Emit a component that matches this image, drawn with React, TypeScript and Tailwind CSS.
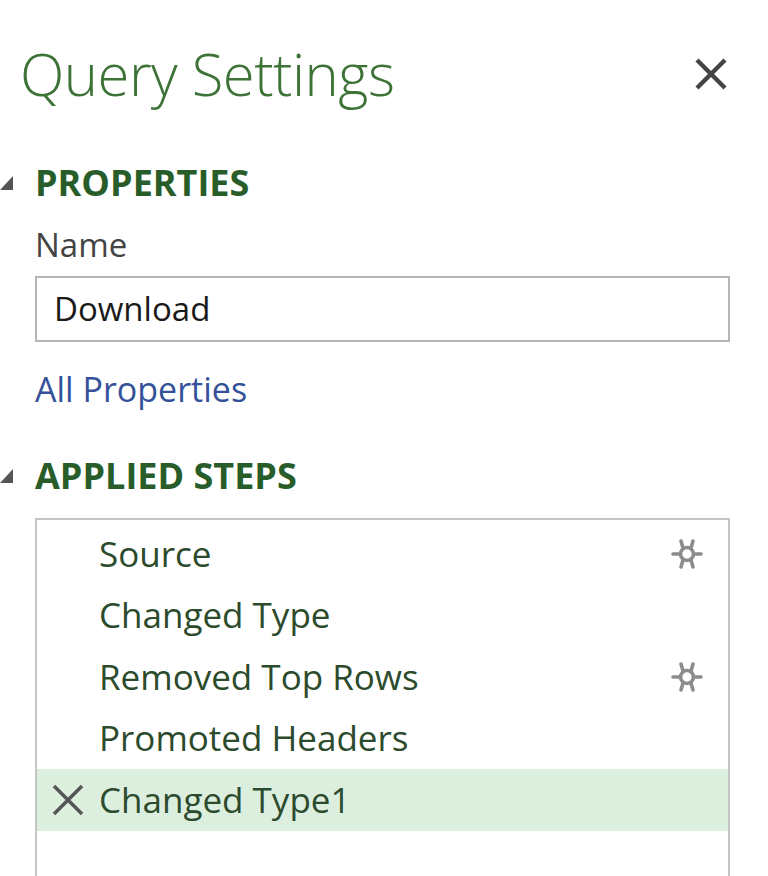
import React from "react";

function Gear() {
  return (
    <svg width="36" height="36" viewBox="0 0 36 36" fill="none" stroke="#8c8c8c" strokeWidth="3.6" strokeLinecap="round">
      <circle cx="18" cy="18" r="6.5" />
      <line x1="14" y1="12" x2="12" y2="5" />
      <line x1="22" y1="12" x2="24" y2="5" />
      <line x1="11.5" y1="18" x2="4" y2="18" />
      <line x1="24.5" y1="18" x2="32" y2="18" />
      <line x1="14" y1="24" x2="12" y2="31" />
      <line x1="22" y1="24" x2="24" y2="31" />
    </svg>
  );
}

function Tri() {
  return (
    <svg width="13" height="14" viewBox="0 0 13 14">
      <polygon points="13,0 13,14 0,14" fill="#555" />
    </svg>
  );
}

export default function App() {
  const steps = [
    { t: "Source", gear: true },
    { t: "Changed Type", gear: false },
    { t: "Removed Top Rows", gear: true },
    { t: "Promoted Headers", gear: false },
    { t: "Changed Type1", gear: false, sel: true },
  ];
  return (
    <div className="w-[768px] h-[876px] overflow-hidden bg-white" style={{ fontFamily: '"Open Sans", "Noto Sans", sans-serif' }}>
      <div className="flex items-center justify-between pl-[20px] pr-[40px] pt-[34px]">
        <div className="text-[58px] leading-[80px] font-light tracking-[-0.5px] text-[#3d7336]">Query Settings</div>
        <svg width="34" height="34" viewBox="0 0 34 34" stroke="#444" strokeWidth="4.5" strokeLinecap="butt">
          <line x1="3" y1="3" x2="31" y2="31" />
          <line x1="31" y1="3" x2="3" y2="31" />
        </svg>
      </div>

      <div className="flex items-center mt-[49px]">
        <div className="w-[35px] flex items-start h-[30px] pt-[8px]"><Tri /></div>
        <div className="text-[36px] leading-[40px] font-bold text-[#285d2a]">PROPERTIES</div>
      </div>

      <div className="pl-[35px] pr-[38px]">
        <div className="text-[33px] leading-[40px] text-[#444] mt-[22px]">Name</div>
        <div className="mt-[11px] h-[66px] border-2 border-[#b5b5b5] flex items-center pl-[17px] text-[33px] text-[#1a1a1a]">Download</div>
        <div className="mt-[27px] text-[34px] leading-[40px] text-[#34519a]">All Properties</div>
      </div>

      <div className="flex items-center mt-[47px]">
        <div className="w-[35px] flex items-start h-[30px] pt-[8px]"><Tri /></div>
        <div className="text-[36px] leading-[40px] font-bold text-[#285d2a]">APPLIED STEPS</div>
      </div>

      <div className="ml-[35px] mr-[38px] mt-[22px] border-2 border-b-0 border-[#c4c4c4] h-[400px] pt-[3px]">
        {steps.map((s) => (
          <div key={s.t} className={`h-[61.5px] flex items-center ${s.sel ? "bg-[#dcefdf]" : ""}`}>
            <div className="w-[62px] flex justify-center">
              {s.sel && (
                <svg width="34" height="32" viewBox="0 0 34 32" stroke="#555" strokeWidth="3.5">
                  <line x1="3" y1="2" x2="31" y2="30" />
                  <line x1="31" y1="2" x2="3" y2="30" />
                </svg>
              )}
            </div>
            <div className="flex-1 text-[35px] leading-[40px] text-[#2c4a2c]">{s.t}</div>
            <div className="w-[36px] mr-[23px]">{s.gear && <Gear />}</div>
          </div>
        ))}
      </div>
    </div>
  );
}
